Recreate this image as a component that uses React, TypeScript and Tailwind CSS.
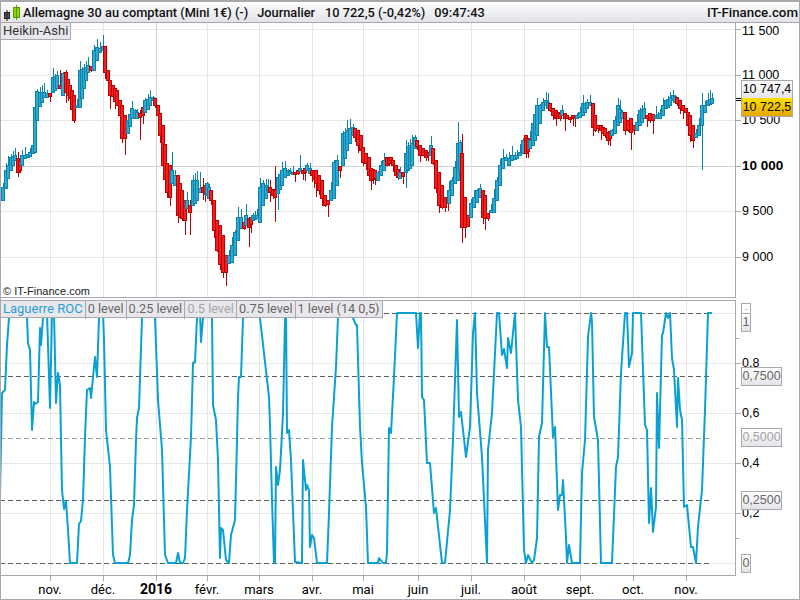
import type { ReactNode } from "react";

const BLUE = "b";
const RED = "r";

type Candle = [number, number, number, string, number?, number?];

// x, body top, body bottom, colour, optional wick top / bottom
const traced: Candle[] = [
  [3, 187, 200, BLUE], [6, 170, 188, BLUE], [8, 165, 178, BLUE], [11, 157, 170, BLUE], [15, 155, 160, BLUE],
  [18, 158, 172, RED, 152, 177], [20, 160, 170, RED], [22, 155, 165, BLUE], [25, 155, 158, BLUE], [30, 152, 156, BLUE],
  [33, 145, 153, BLUE], [35, 107, 152, BLUE], [37, 91, 120, BLUE], [40, 92, 106, BLUE], [44, 92, 97, BLUE],
  [50, 93, 96, RED], [53, 77, 92, BLUE], [57, 75, 88, BLUE], [60, 85, 88, RED, 70, 88], [63, 73, 95, BLUE],
  [66, 72, 92, RED, 70, 103], [70, 85, 98, RED], [74, 95, 120, RED], [77, 105, 107, BLUE], [80, 70, 107, BLUE],
  [84, 68, 88, BLUE], [88, 65, 72, BLUE], [91, 66, 70, RED], [94, 50, 70, BLUE], [97, 47, 60, BLUE],
  [100, 48, 52, BLUE, 42, 52], [103, 46, 50, BLUE, 35, 50], [105, 46, 72, RED], [108, 70, 80, RED], [110, 80, 95, RED, 80, 109],
  [113, 85, 96, RED], [117, 90, 105, RED], [120, 100, 115, RED], [122, 105, 138, RED, 105, 143], [125, 115, 138, RED, 115, 155],
  [128, 120, 133, BLUE], [132, 108, 118, BLUE], [137, 112, 118, BLUE], [140, 113, 117, RED, 110, 140], [145, 100, 112, BLUE],
  [150, 97, 105, BLUE], [153, 97, 100, BLUE], [155, 98, 105, RED], [158, 105, 115, RED], [160, 113, 135, RED],
  [163, 125, 165, RED], [167, 163, 192, RED], [170, 165, 197, RED], [172, 170, 183, BLUE, 152, 183], [175, 175, 185, BLUE],
  [178, 175, 215, RED], [182, 190, 218, RED], [185, 200, 220, RED, 200, 235], [187, 200, 208, BLUE], [190, 205, 212, RED, 200, 235],
  [193, 180, 205, BLUE], [197, 180, 200, BLUE], [200, 188, 192, BLUE, 172, 192], [203, 187, 192, RED, 178, 200], [207, 183, 195, BLUE],
  [211, 190, 200, RED], [214, 200, 230, RED], [217, 220, 250, RED], [220, 225, 264, RED, 225, 270], [223, 235, 272, RED, 235, 278],
  [226, 255, 272, RED, 255, 286], [229, 255, 263, BLUE], [232, 245, 262, BLUE], [235, 232, 255, BLUE], [238, 217, 240, BLUE, 207, 240],
  [241, 217, 228, BLUE], [244, 222, 228, RED], [246, 215, 225, BLUE, 204, 225], [249, 218, 227, RED, 218, 247], [253, 215, 220, BLUE],
  [257, 215, 218, BLUE], [260, 187, 222, BLUE], [263, 183, 205, BLUE], [268, 187, 190, BLUE],
  [270, 187, 192, RED, 180, 202], [275, 190, 197, RED, 166, 222], [278, 177, 193, BLUE, 177, 210], [282, 170, 185, BLUE, 162, 185], [285, 168, 177, BLUE],
  [290, 171, 173, BLUE], [295, 172, 174, RED], [300, 168, 171, BLUE, 155, 171], [303, 170, 173, RED], [307, 165, 170, BLUE],
  [312, 170, 175, RED], [316, 170, 183, RED, 170, 197], [319, 175, 190, RED], [322, 180, 198, RED], [325, 195, 205, RED],
  [328, 200, 204, RED, 200, 217], [331, 190, 200, BLUE], [334, 162, 198, BLUE], [337, 160, 185, BLUE], [340, 166, 170, RED],
  [343, 133, 165, BLUE], [347, 130, 150, BLUE, 120, 150], [350, 128, 143, BLUE], [353, 127, 135, BLUE], [355, 128, 137, RED],
  [358, 130, 145, RED], [361, 135, 150, RED], [363, 147, 162, RED], [366, 153, 163, RED], [369, 157, 175, RED],
  [371, 168, 180, RED, 168, 190], [375, 170, 178, RED], [378, 172, 180, BLUE], [381, 165, 175, BLUE], [384, 160, 170, BLUE],
  [387, 157, 165, RED], [391, 157, 160, RED], [393, 160, 165, RED], [396, 165, 175, RED], [400, 172, 178, BLUE],
  [403, 172, 176, RED], [406, 153, 172, BLUE, 140, 188], [408, 146, 170, BLUE], [412, 143, 165, BLUE], [415, 137, 148, BLUE],
  [417, 140, 146, RED], [420, 145, 155, RED], [423, 148, 155, RED], [426, 150, 157, RED], [428, 152, 155, RED],
  [431, 145, 155, BLUE], [433, 148, 163, RED], [436, 160, 188, RED], [439, 172, 205, RED], [442, 185, 207, RED],
  [445, 197, 207, RED], [448, 197, 203, RED], [449, 190, 203, BLUE], [452, 180, 195, BLUE], [455, 167, 183, BLUE],
  [458, 143, 180, BLUE, 122, 180], [460, 142, 170, BLUE], [462, 153, 227, RED, 134, 243], [465, 197, 227, RED, 197, 238], [468, 215, 226, RED],
  [471, 203, 217, BLUE], [474, 197, 207, BLUE], [477, 190, 202, BLUE], [480, 188, 197, BLUE], [483, 190, 217, RED],
  [485, 195, 218, RED, 195, 230], [488, 213, 218, RED], [491, 210, 212, BLUE], [494, 198, 212, BLUE], [497, 180, 200, BLUE],
  [500, 165, 185, BLUE], [503, 158, 168, BLUE], [506, 157, 160, BLUE], [509, 158, 165, BLUE], [512, 155, 160, BLUE],
  [517, 155, 158, BLUE], [520, 152, 155, BLUE], [523, 140, 153, BLUE], [526, 135, 153, RED, 135, 158], [530, 140, 148, BLUE],
  [533, 123, 145, BLUE], [537, 105, 135, BLUE], [540, 105, 123, BLUE], [543, 102, 110, BLUE], [546, 100, 105, BLUE, 92, 105],
  [550, 103, 110, RED], [553, 108, 115, RED], [556, 110, 118, RED], [560, 113, 118, RED], [562, 110, 115, BLUE],
  [565, 113, 118, RED, 113, 131], [567, 115, 118, RED], [570, 117, 119, RED], [573, 115, 118, RED, 115, 126], [577, 115, 118, BLUE],
  [580, 112, 117, BLUE], [583, 103, 115, BLUE], [587, 102, 108, BLUE], [590, 102, 105, BLUE, 95, 105], [593, 103, 127, RED],
  [595, 115, 130, RED], [598, 125, 128, RED], [601, 125, 130, RED, 125, 140], [605, 128, 135, RED], [608, 132, 140, RED, 132, 145],
  [612, 130, 135, BLUE], [615, 120, 133, BLUE], [618, 105, 125, BLUE], [622, 112, 118, BLUE], [625, 112, 130, RED, 112, 135],
  [628, 120, 130, RED, 120, 132], [631, 118, 132, RED, 118, 150], [634, 125, 130, RED], [637, 122, 130, BLUE], [640, 110, 125, BLUE],
  [644, 108, 118, BLUE], [647, 115, 118, RED], [650, 113, 120, RED], [653, 114, 120, RED, 114, 134], [656, 115, 118, BLUE],
  [660, 113, 118, BLUE], [663, 105, 115, BLUE], [666, 100, 108, BLUE], [670, 97, 105, BLUE], [673, 95, 100, BLUE, 90, 100],
  [677, 97, 103, RED], [680, 100, 108, RED], [683, 105, 110, RED], [686, 108, 112, RED], [688, 112, 125, RED],
  [690, 115, 135, RED], [693, 125, 140, RED, 125, 148], [696, 133, 137, BLUE], [699, 125, 135, BLUE], [702, 105, 125, BLUE, 93, 170],
  [705, 105, 112, BLUE], [708, 100, 105, BLUE, 93, 105], [712, 98, 103, BLUE, 93, 103],
];

// the trace skips some bars where the ribbon is flat, fill those in
const candles: Candle[] = traced.flatMap((c, i) => {
  const next = traced[i + 1];
  if (!next || next[0] - c[0] < 4) return [c];
  const mid: Candle = [Math.round((c[0] + next[0]) / 2), Math.round((c[1] + next[1]) / 2), Math.round((c[2] + next[2]) / 2), c[3]];
  return [c, mid];
});

// Laguerre ROC line, page coordinates
const laguerre =
  "0,495 2,393 5,390 7,345 9,318 10,313 26,313 27,318 28,343 30,350 32,430 34,402 35,404 38,402 40,328 41,345 43,318 44,313 47,313 50,408 52,313 54,313 56,403 58,373 60,385 61,440 62,490 64,509 66,501 68,530 70,563 77,563 79,524 81,521 83,500 85,437 87,390 90,388 91,398 95,357 97,377 99,318 100,313 103,313 104,340 106,430 110,467 113,555 115,563 128,563 130,555 132,520 134,505 136,440 137,418 139,408 142,318 143,313 153,313 155,318 156,345 158,400 161,437 162,450 165,555 168,563 176,563 178,553 180,563 183,563 185,558 187,510 191,437 193,363 195,362 197,318 198,313 200,313 201,342 203,318 204,313 211,313 212,318 213,405 216,420 218,460 220,558 221,528 223,530 226,560 229,563 231,535 235,520 237,440 238,397 239,377 241,377 243,318 244,313 259,313 260,318 269,397 270,425 272,500 274,563 275,563 276,467 278,485 280,470 282,433 283,413 285,320 286,313 287,433 289,430 291,460 295,562 302,563 303,460 306,490 307,485 309,490 310,547 312,535 314,538 317,563 327,563 329,513 332,427 336,367 338,317 339,313 352,313 353,318 356,325 357,325 360,427 362,463 366,507 368,563 378,563 379,558 383,563 386,563 387,552 389,428 391,433 394,377 397,313 416,313 418,348 420,313 421,313 422,397 424,400 427,463 430,463 434,513 436,508 442,563 445,563 450,510 453,440 457,320 459,417 461,412 466,457 470,427 473,333 475,313 477,393 482,457 487,563 488,450 492,413 497,313 499,313 502,355 504,349 507,368 508,338 511,353 515,313 518,400 521,427 524,550 526,563 528,555 532,563 534,560 537,538 539,437 542,423 545,313 547,347 549,347 553,437 555,427 558,510 560,495 562,495 563,480 566,537 567,563 569,545 572,563 580,563 582,473 585,440 588,337 591,313 592,322 594,417 598,440 601,563 612,563 616,467 618,457 621,373 625,313 627,313 629,367 632,353 633,313 641,313 645,425 647,430 649,523 651,488 653,532 656,507 657,393 659,448 662,335 663,333 666,313 668,318 670,313 672,358 674,370 677,427 678,378 680,410 682,420 684,507 687,505 691,547 693,547 696,563 698,527 702,490 705,410 708,313 712,313";

const vGrid = [50, 103, 156, 207, 259, 312, 363, 418, 471, 524, 580, 633, 686];
const months = [
  { x: 50, label: "nov." },
  { x: 103, label: "déc." },
  { x: 156, label: "2016", bold: true },
  { x: 207, label: "févr." },
  { x: 259, label: "mars" },
  { x: 312, label: "avr." },
  { x: 363, label: "mai" },
  { x: 418, label: "juin" },
  { x: 471, label: "juil." },
  { x: 524, label: "août" },
  { x: 580, label: "sept." },
  { x: 633, label: "oct." },
  { x: 686, label: "nov." },
];

const priceTicks = [
  { y: 29, label: "11 500", dy: 2 },
  { y: 75, label: "11 000", dy: 0 },
  { y: 120, label: "10 500", dy: 0 },
  { y: 166, label: "10 000", dy: 0, strong: true },
  { y: 211, label: "9 500", dy: 0 },
  { y: 257, label: "9 000", dy: 0 },
];

const rocTicks = [
  { y: 363, label: "0,8" },
  { y: 413, label: "0,6" },
  { y: 463, label: "0,4" },
  { y: 513, label: "0,2" },
];

const levels = [
  { y: 376, top: 367, label: "0,7500", cls: "text-[#666]" },
  { y: 438, top: 428, label: "0,5000", cls: "text-[#a5a5a5]" },
  { y: 500, top: 491, label: "0,2500", cls: "text-[#666]" },
];

function wick(x: number) {
  return ((x * 37) % 9) + 1;
}

function PriceChart() {
  return (
    <svg width={734} height={274} viewBox="1 23 734 274" className="block">
      <g shapeRendering="crispEdges">
        {priceTicks.map((t) => (
          <line key={t.y} x1={0} x2={735} y1={t.y + 0.5} y2={t.y + 0.5} stroke={t.strong ? "#d0d0d0" : "#e6e6e6"} />
        ))}
        {vGrid.map((x) => (
          <line key={x} x1={x + 0.5} x2={x + 0.5} y1={23} y2={297} stroke={x === 156 ? "#d0d0d0" : "#e6e6e6"} />
        ))}
        {candles.map(([x, top, bot, c, wt, wb], i) => {
          const isRed = c === RED;
          const up = wt ?? (isRed ? top : top - wick(x));
          const down = wb ?? (isRed ? bot + wick(x) : bot);
          return (
            <g key={i}>
              <line x1={x + 0.5} x2={x + 0.5} y1={up} y2={down} stroke={isRed ? "#c00000" : "#0a84a8"} />
              <rect
                x={x - 1.5}
                y={top + 0.5}
                width={3}
                height={Math.max(bot - top, 2)}
                fill={isRed ? "#f02020" : "#30a8d0"}
                stroke={isRed ? "#c00000" : "#0a84a8"}
              />
            </g>
          );
        })}
      </g>
    </svg>
  );
}

function RocChart() {
  return (
    <svg width={734} height={274} viewBox="1 301 734 274" className="block">
      <g shapeRendering="crispEdges">
        {[313, ...rocTicks.map((t) => t.y), 563].map((y) => (
          <line key={y} x1={0} x2={735} y1={y + 0.5} y2={y + 0.5} stroke="#e6e6e6" />
        ))}
        {vGrid.map((x) => (
          <line key={x} x1={x + 0.5} x2={x + 0.5} y1={300} y2={575} stroke="#e6e6e6" />
        ))}
        {[313, 376, 438, 500, 563].map((y) => (
          <line key={y} x1={0} x2={710} y1={y + 0.5} y2={y + 0.5} stroke={y === 438 ? "#a0a0a0" : "#606060"} strokeDasharray="5 3" />
        ))}
      </g>
      <polyline points={laguerre} fill="none" stroke="#0aa0d2" strokeWidth={2} strokeLinejoin="round" />
    </svg>
  );
}

function LegendItem({ children, className }: { children: ReactNode; className?: string }) {
  return <span className={"px-[2px] text-center border-r border-[#a8a8ae] " + (className ?? "")}>{children}</span>;
}

export default function App() {
  return (
    <div className="w-[800px] h-[600px] flex flex-col bg-white border-t-2 border-l border-r border-b border-[#a8a8ae] overflow-hidden font-['Roboto',sans-serif] text-black">
      <header className="h-[21px] shrink-0 flex items-center pt-px bg-gradient-to-b from-white to-[#e2e2e8] border-b border-[#a8a8ae] text-[12.8px] font-medium text-[#111] whitespace-nowrap">
        <svg width={18} height={16} viewBox="0 0 18 16" className="ml-[2px] mr-[2px] shrink-0">
          <rect x={1.5} y={7.5} width={5} height={6} fill="#555" stroke="#222" />
          <line x1={4} x2={4} y1={5} y2={16} stroke="#222" />
          <rect x={10.5} y={2.5} width={6} height={10} fill="#8fd400" stroke="#5a9a00" />
          <line x1={13.5} x2={13.5} y1={0} y2={15} stroke="#5a9a00" />
        </svg>
        <span>Allemagne 30 au comptant (Mini 1€) (-)</span>
        <span className="ml-[9px]">Journalier</span>
        <span className="ml-[10px]">10 722,5 (-0,42%)</span>
        <span className="ml-[9px]">09:47:43</span>
        <span className="ml-auto mr-[1px] text-[13.3px]">IT-Finance.com</span>
      </header>

      <div className="h-[275px] shrink-0 flex">
        <div className="relative w-[735px] border-r border-b border-[#a8a8ae] overflow-hidden">
          <PriceChart />
          <div className="absolute left-0 top-0 h-[17px] px-[2px] flex items-center bg-[#e8e8ec] border-r border-b border-[#a8a8ae] text-[13px] text-[#333]">
            Heikin-Ashi
          </div>
          <div className="absolute left-[2px] -bottom-px text-[11px] leading-[14px] text-[#222] font-['Liberation_Sans',sans-serif]">
            © IT-Finance.com
          </div>
        </div>
        <div className="relative flex-1 font-['Liberation_Sans',sans-serif] text-[12.5px]">
          {priceTicks.map((t) => (
            <div key={t.y} className="absolute left-0 flex items-center h-[16px] -mt-[8px]" style={{ top: t.y - 23 }}>
              <span className="w-[5px] h-px bg-[#a8a8ae] mr-[1px]" />
              <span className={t.strong ? "text-[13.5px] font-bold" : ""} style={{ marginTop: t.dy * 2 }}>{t.label}</span>
            </div>
          ))}
          <div className="absolute left-0 top-[75px] w-[5px] h-[3px] border-y border-black" />
          <div className="absolute left-[5px] top-[57px] w-[52px] border border-[#a8a8ae] text-center whitespace-nowrap">
            <div className="leading-[17px] bg-gradient-to-b from-white to-[#e4e4e8]">10 747,4</div>
            <div className="leading-[18px] bg-gradient-to-b from-[#ffe000] to-[#e6a800]">10 722,5</div>
          </div>
        </div>
      </div>

      <div className="h-[278px] shrink-0 flex pt-[2px]">
        <div className="relative w-[735px] border-t border-r border-b border-[#a8a8ae] overflow-hidden">
          <RocChart />
          <div className="absolute left-0 top-0 h-[17px] flex items-center bg-[#e8e8ec] border-b border-[#a8a8ae] text-[12.7px] text-[#666] whitespace-nowrap">
            <LegendItem className="text-[13px] text-[#2a9fd6]">Laguerre ROC</LegendItem>
            <LegendItem>0 level</LegendItem>
            <LegendItem>0.25 level</LegendItem>
            <LegendItem className="w-[52px] text-[#a5a5a5]">0.5 level</LegendItem>
            <LegendItem>0.75 level</LegendItem>
            <LegendItem>1 level (14 0,5)</LegendItem>
          </div>
        </div>
        <div className="relative flex-1 font-['Liberation_Sans',sans-serif] text-[12.5px]">
          {[338, 388, 538].map((y) => (
            <span key={y} className="absolute left-0 w-[3px] h-px bg-[#a8a8ae]" style={{ top: y - 300 }} />
          ))}
          {rocTicks.map((t) => (
            <div key={t.y} className="absolute left-0 flex items-center h-[16px] -mt-[8px]" style={{ top: t.y - 300 }}>
              <span className="w-[5px] h-px bg-[#a8a8ae] mr-[1px]" />
              <span>{t.label}</span>
            </div>
          ))}
          <div className="absolute left-[5px] top-[3px] w-[10px] h-[11px] border border-b-0 border-[#a8a8ae] text-center text-[8px] leading-[10px] text-[#0aa0d2]">-</div>
          <div className="absolute left-[5px] top-[13px] w-[10px] h-[19px] border border-[#a8a8ae] bg-gradient-to-b from-white to-[#e4e4e8] text-center leading-[17px] text-[#666]">1</div>
          {levels.map((l) => (
            <div key={l.y} className={"absolute left-[5px] w-[41px] h-[19px] border border-[#a8a8ae] bg-gradient-to-b from-white to-[#e4e4e8] text-center leading-[17px] " + l.cls} style={{ top: l.top - 300 }}>
              {l.label}
            </div>
          ))}
          <div className="absolute left-[5px] top-[254px] w-[10px] h-[19px] border border-[#a8a8ae] bg-gradient-to-b from-white to-[#e4e4e8] text-center leading-[17px] text-[#666]">0</div>
        </div>
      </div>

      <div className="relative flex-1">
        {months.map((m) => (
          <div key={m.x + m.label} className="absolute top-0 w-[60px] -ml-[30px] flex flex-col items-center" style={{ left: m.x - 1 }}>
            <span className="w-px h-[5px] bg-[#a8a8ae]" />
            <span className={m.bold ? "text-[14px] leading-[17px] font-bold" : "text-[13px] leading-[17px]"}>{m.label}</span>
          </div>
        ))}
      </div>
    </div>
  );
}
